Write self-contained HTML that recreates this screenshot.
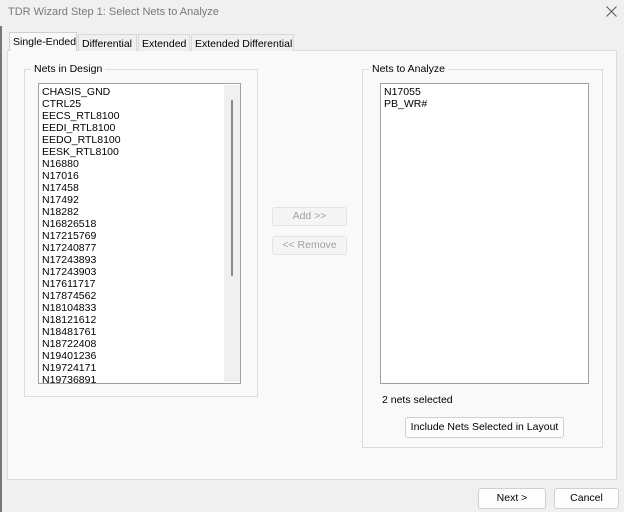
<!DOCTYPE html>
<html><head><style>
*{margin:0;padding:0;box-sizing:border-box}
body{width:624px;height:512px;background:#f0f0f0;font-family:"Liberation Sans",sans-serif;font-size:10.5px;color:#000;position:relative;overflow:hidden}
.a{position:absolute}
.title{left:8px;top:6px;font-size:11px;color:#7a7a7a}
.tab{top:34px;height:17px;border:1px solid #d9d9d9;border-bottom:none;background:#f0f0f0;padding:3px 3px 0;white-space:nowrap}
.panel{left:7px;top:50px;width:610px;height:430px;background:#f9f9f9;border:1px solid #dcdcdc}
.grp{border:1px solid #dcdcdc}
.lbl{background:#f9f9f9;padding:0 3px}
.list{background:#fff;border:1px solid #a0a0a0;overflow:hidden}
.list div{height:12px;line-height:12px;padding-left:3px}
.btn{border:1px solid #d0d0d0;border-radius:3px;background:#fdfdfd;text-align:center}
.dis{color:#a0a0a0;background:#f5f5f5;border-color:#e3e3e3}
</style></head><body>
<div class="a title">TDR Wizard Step 1: Select Nets to Analyze</div>
<svg class="a" style="left:606px;top:6px" width="11" height="11" viewBox="0 0 11 11"><path d="M0.5 0.5L10.5 10.5M10.5 0.5L0.5 10.5" stroke="#555" stroke-width="1"/></svg>
<div class="a" style="left:0;top:26px;width:2px;height:486px;background:#777"></div>
<div class="a panel"></div>
<div class="a tab" style="left:9px;top:32px;height:19px;background:#f9f9f9;z-index:2;border-color:#d0d0d0;width:68px">Single-Ended</div>
<div class="a tab" style="left:78px;width:59px">Differential</div>
<div class="a tab" style="left:138px;width:52px">Extended</div>
<div class="a tab" style="left:191px;width:103px">Extended Differential</div>

<div class="a grp" style="left:24px;top:69px;width:234px;height:328px"></div>
<div class="a lbl" style="left:31px;top:63px">Nets in Design</div>
<div class="a list" style="left:38px;top:83px;width:203px;height:301px">
<div style="margin-top:2px">CHASIS_GND</div><div>CTRL25</div><div>EECS_RTL8100</div><div>EEDI_RTL8100</div><div>EEDO_RTL8100</div><div>EESK_RTL8100</div><div>N16880</div><div>N17016</div><div>N17458</div><div>N17492</div><div>N18282</div><div>N16826518</div><div>N17215769</div><div>N17240877</div><div>N17243893</div><div>N17243903</div><div>N17611717</div><div>N17874562</div><div>N18104833</div><div>N18121612</div><div>N18481761</div><div>N18722408</div><div>N19401236</div><div>N19724171</div><div>N19736891</div>
<span class="a" style="left:185px;top:1px;width:16px;height:297px;background:#f0f0f0"></span>
<span class="a" style="left:192px;top:16px;width:2px;height:176px;background:#8a8a8a"></span>
</div>

<div class="a btn dis" style="left:272px;top:207px;width:75px;height:19px;line-height:17px">Add &gt;&gt;</div>
<div class="a btn dis" style="left:272px;top:236px;width:75px;height:19px;line-height:17px">&lt;&lt; Remove</div>

<div class="a grp" style="left:362px;top:69px;width:241px;height:379px"></div>
<div class="a lbl" style="left:369px;top:63px">Nets to Analyze</div>
<div class="a list" style="left:380px;top:83px;width:209px;height:301px">
<div style="margin-top:2px">N17055</div><div>PB_WR#</div>
</div>
<div class="a" style="left:382px;top:394px">2 nets selected</div>
<div class="a btn" style="left:405px;top:417px;width:159px;height:21px;line-height:19px">Include Nets Selected in Layout</div>

<div class="a btn" style="left:478px;top:488px;width:68px;height:21px;line-height:19px">Next &gt;</div>
<div class="a btn" style="left:554px;top:488px;width:65px;height:21px;line-height:19px">Cancel</div>
</body></html>
